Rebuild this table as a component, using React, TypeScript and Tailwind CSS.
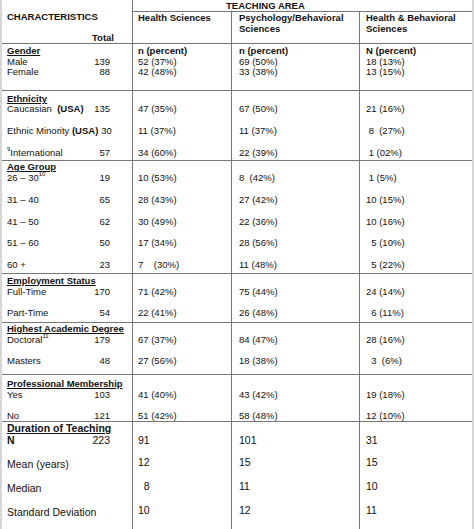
import React from 'react';

type Cell = React.ReactNode;

interface Row {
  cls: string;
  c: [Cell, Cell, Cell, Cell, Cell];
  shiftData?: boolean;
}

interface SectionProps {
  h: string;
  pt: string;
  rows: Row[];
  big?: boolean;
  last?: boolean;
}

// underlined bold group heading
const Head: React.FC<{ children: React.ReactNode }> = ({ children }) => (
  <span className="font-bold underline underline-offset-[1px] decoration-[1px]">{children}</span>
);

const Sup: React.FC<{ children: React.ReactNode }> = ({ children }) => (
  <sup className="text-[6px] leading-none align-[2px]">{children}</sup>
);

const Section: React.FC<SectionProps> = ({ h, pt, rows, big, last }) => {
  const text = big ? 'text-[10.5px] leading-[12px]' : 'text-[9.5px] leading-[10.5px]';
  const colCls = [
    'w-[131px] border-r border-[#777] pl-[5px] pr-[22px]',
    'w-[99px] border-r border-[#777] pl-[5px]',
    'w-[128px] border-r border-[#777] pl-[7px]',
    'w-[112px] pl-[6px]',
  ];
  return (
    <div className={`flex ${last ? '' : 'border-b border-[#777]'} ${h} ${text}`}>
      {colCls.map((cc, ci) => (
        <div key={ci} className={`flex flex-col ${pt} ${cc}`}>
          {rows.map((r, ri) => (
            <div key={ri} className={`shrink-0 ${r.cls}`}>
              {ci === 0 ? (
                <div className="flex justify-between gap-[3px] whitespace-pre">
                  <span>{r.c[0]}</span>
                  <span>{r.c[1]}</span>
                </div>
              ) : (
                <div className={`whitespace-pre ${r.shiftData ? '-mt-[2px]' : ''}`}>{r.c[ci + 1]}</div>
              )}
            </div>
          ))}
        </div>
      ))}
    </div>
  );
};

const gender: Row[] = [
  { cls: 'h-[11px]', c: [<Head>Gender</Head>, null, <b>n (percent)</b>, <b>n (percent)</b>, <b>N (percent)</b>] },
  { cls: 'h-[10px]', c: ['Male', '139', '52 (37%)', '69 (50%)', '18 (13%)'] },
  { cls: '', c: ['Female', '88', '42 (48%)', '33 (38%)', '13 (15%)'] },
];

const ethnicity: Row[] = [
  { cls: 'h-[10px]', c: [<Head>Ethnicity</Head>, null, null, null, null] },
  { cls: 'h-[22px]', c: [<>Caucasian  <b>(USA)</b></>, '135', '47 (35%)', '67 (50%)', '21 (16%)'] },
  { cls: 'h-[22px]', c: [<>Ethnic Minority <b>(USA)</b></>, '30', '11 (37%)', '11 (37%)', ' 8  (27%)'] },
  { cls: '', c: [<><Sup>9</Sup>International</>, '57', '34 (60%)', '22 (39%)', ' 1 (02%)'] },
];

const age: Row[] = [
  { cls: 'h-[11px]', c: [<Head>Age Group</Head>, null, null, null, null] },
  { cls: 'h-[22px]', c: [<>26 – 30<Sup>10</Sup></>, '19', '10 (53%)', '8  (42%)', ' 1 (5%)'] },
  { cls: 'h-[22px]', c: ['31 – 40', '65', '28 (43%)', '27 (42%)', '10 (15%)'] },
  { cls: 'h-[21px]', c: ['41 – 50', '62', '30 (49%)', '22 (36%)', '10 (16%)'] },
  { cls: 'h-[22px]', c: ['51 – 60', '50', '17 (34%)', '28 (56%)', '  5 (10%)'] },
  { cls: '', c: ['60 +', '23', '7    (30%)', '11 (48%)', '  5 (22%)'] },
];

const employment: Row[] = [
  { cls: 'h-[11px]', c: [<Head>Employment Status</Head>, null, null, null, null] },
  { cls: 'h-[21px]', c: ['Full-Time', '170', '71 (42%)', '75 (44%)', '24 (14%)'] },
  { cls: '', c: ['Part-Time', '54', '22 (41%)', '26 (48%)', '  6 (11%)'] },
];

const degree: Row[] = [
  { cls: 'h-[11px]', c: [<Head>Highest Academic Degree</Head>, null, null, null, null] },
  { cls: 'h-[21px]', c: [<>Doctoral<Sup>11</Sup></>, '179', '67 (37%)', '84 (47%)', '28 (16%)'] },
  { cls: '', c: ['Masters', '48', '27 (56%)', '18 (38%)', '  3  (6%)'] },
];

const membership: Row[] = [
  { cls: 'h-[11px]', c: [<Head>Professional Membership</Head>, null, null, null, null] },
  { cls: 'h-[21px]', c: ['Yes', '103', '41 (40%)', '43 (42%)', '19 (18%)'] },
  { cls: '', c: ['No', '121', '51 (42%)', '58 (48%)', '12 (10%)'] },
];

const duration: Row[] = [
  { cls: 'h-[12px]', c: [<Head>Duration of Teaching</Head>, null, null, null, null] },
  { cls: 'h-[24px]', c: [<b>N</b>, '223', '91', '101', '31'] },
  { cls: 'h-[24px]', shiftData: true, c: ['Mean (years)', null, '12', '15', '15'] },
  { cls: 'h-[24px]', shiftData: true, c: ['Median', null, '  8', '11', '10'] },
  { cls: '', shiftData: true, c: ['Standard Deviation', null, '10', '12', '11'] },
];

export default function App() {
  return (
    <div className="w-[474px] h-[529px] overflow-hidden bg-white border-l-2 border-r-2 border-[#d6d6d6] font-['Liberation_Sans',Arial,sans-serif] text-[#111]">
      {/* header */}
      <div className="flex h-[44px] border-b border-[#777] text-[9.5px] font-bold">
        <div className="w-[131px] border-r border-[#777] flex flex-col pt-[11px] pl-[5px] pr-[18px] leading-[11px]">
          <div>CHARACTERISTICS</div>
          <div className="mt-[10px] text-right">Total</div>
        </div>
        <div className="flex-1 flex flex-col">
          <div className="h-[12px] border-b border-[#777] pl-[93px] leading-[12px]">TEACHING AREA</div>
          <div className="flex flex-1 leading-[11px]">
            <div className="w-[99px] border-r border-[#777] pl-[5px]">Health Sciences</div>
            <div className="w-[128px] border-r border-[#777] pl-[7px]">
              Psychology/Behavioral
              <br />
              Sciences
            </div>
            <div className="w-[112px] pl-[6px]">
              Health &amp; Behavioral
              <br />
              Sciences
            </div>
          </div>
        </div>
      </div>

      <Section h="h-[47px]" pt="pt-[2px]" rows={gender} />
      <Section h="h-[70px]" pt="pt-[3px]" rows={ethnicity} />
      <Section h="h-[113px]" pt="pt-[1px]" rows={age} />
      <Section h="h-[49px]" pt="pt-[2px]" rows={employment} />
      <Section h="h-[52px]" pt="pt-[1px]" rows={degree} />
      <Section h="h-[47px]" pt="pt-[4px]" rows={membership} />
      <Section h="h-[107px]" pt="pt-0" rows={duration} big last />
    </div>
  );
}
